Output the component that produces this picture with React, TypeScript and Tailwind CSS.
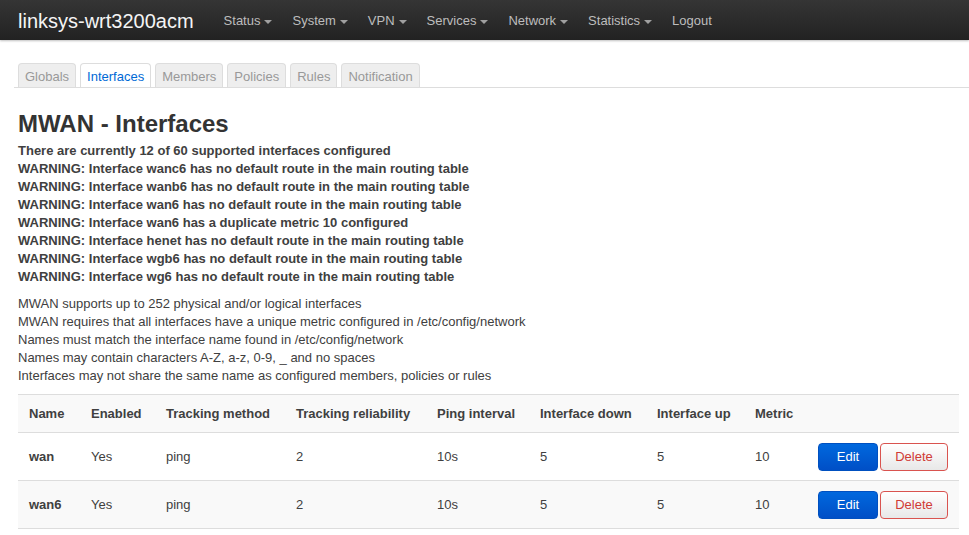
import React from "react";

const navItems = [
  { label: "Status", caret: true },
  { label: "System", caret: true },
  { label: "VPN", caret: true },
  { label: "Services", caret: true },
  { label: "Network", caret: true },
  { label: "Statistics", caret: true },
  { label: "Logout", caret: false },
];

const tabs = ["Globals", "Interfaces", "Members", "Policies", "Rules", "Notification"];

const warnings = [
  "There are currently 12 of 60 supported interfaces configured",
  "WARNING: Interface wanc6 has no default route in the main routing table",
  "WARNING: Interface wanb6 has no default route in the main routing table",
  "WARNING: Interface wan6 has no default route in the main routing table",
  "WARNING: Interface wan6 has a duplicate metric 10 configured",
  "WARNING: Interface henet has no default route in the main routing table",
  "WARNING: Interface wgb6 has no default route in the main routing table",
  "WARNING: Interface wg6 has no default route in the main routing table",
];

const notes = [
  "MWAN supports up to 252 physical and/or logical interfaces",
  "MWAN requires that all interfaces have a unique metric configured in /etc/config/network",
  "Names must match the interface name found in /etc/config/network",
  "Names may contain characters A-Z, a-z, 0-9, _ and no spaces",
  "Interfaces may not share the same name as configured members, policies or rules",
];

const headers = [
  "Name",
  "Enabled",
  "Tracking method",
  "Tracking reliability",
  "Ping interval",
  "Interface down",
  "Interface up",
  "Metric",
  "",
];

const rows = [
  ["wan", "Yes", "ping", "2", "10s", "5", "5", "10"],
  ["wan6", "Yes", "ping", "2", "10s", "5", "5", "10"],
];

const gridCols =
  "grid grid-cols-[62px_75px_130px_141px_103px_117px_98px_63px_152px]";

export default function App() {
  return (
    <div className="min-h-screen bg-white font-['Liberation_Sans',Arial,sans-serif] text-[13px] text-[#404040]">
      <header className="flex h-[40px] items-center bg-gradient-to-b from-[#353535] to-[#222222] pt-[1px] shadow-[0_1px_2px_rgba(0,0,0,0.25)]">
        <span className="ml-[18px] text-[20px] leading-none text-[#f5f5f5]">
          linksys-wrt3200acm
        </span>
        <nav className="ml-[20px] flex h-full items-center pt-[1px]">
          {navItems.map((n) => (
            <span
              key={n.label}
              className="flex items-center px-[10px] text-[13px] text-[#bdbdbd]"
            >
              {n.label}
              {n.caret && (
                <span className="ml-[4px] mt-[1px] h-0 w-0 border-x-[4px] border-t-[4px] border-x-transparent border-t-[#a0a0a0]" />
              )}
            </span>
          ))}
        </nav>
      </header>

      <div className="ml-[14px] mt-[23px] flex gap-[4px] border-b border-[#dddddd] pl-[4px]">
        {tabs.map((t) => {
          const active = t === "Interfaces";
          return (
            <div
              key={t}
              className={
                active
                  ? "flex h-[24px] items-center rounded-t-[4px] border border-b-0 border-[#dddddd] bg-white px-[6px] pt-[2px] text-[#0069d6]"
                  : "flex h-[24px] items-center rounded-t-[4px] border border-b-0 border-[#dddddd] bg-[#eeeeee] px-[6px] pt-[2px] text-[#999999]"
              }
            >
              {t}
            </div>
          );
        })}
      </div>

      <div className="px-[18px]">
        <h2 className="mt-[23px] mb-[5px] text-[24px] font-bold leading-[26px] text-[#333333]">
          MWAN - Interfaces
        </h2>
        <div className="font-bold leading-[18px]">
          {warnings.map((w) => (
            <div key={w}>{w}</div>
          ))}
        </div>
        <div className="mt-[9px] leading-[18px]">
          {notes.map((n) => (
            <div key={n}>{n}</div>
          ))}
        </div>

        <div className="mt-[9px] w-[941px]">
          <div
            className={`${gridCols} h-[39px] items-center border-y border-[#dddddd] bg-[#f9f9f9] font-bold`}
          >
            {headers.map((h, i) => (
              <div key={i} className="pl-[11px]">
                {h}
              </div>
            ))}
          </div>
          {rows.map((r, ri) => (
            <div
              key={ri}
              className={`${gridCols} h-[48px] items-center border-b border-[#dddddd] ${
                ri % 2 === 1 ? "bg-[#f9f9f9]" : "bg-white"
              }`}
            >
              {r.map((c, ci) => (
                <div key={ci} className={ci === 0 ? "pl-[11px] font-bold" : "pl-[11px]"}>
                  {c}
                </div>
              ))}
              <div className="flex gap-[2px] pl-[11px]">
                <button className="h-[28px] w-[60px] rounded-[4px] border border-[#0050c0] bg-gradient-to-b from-[#0068de] to-[#004fc6] text-[13px] text-white">
                  Edit
                </button>
                <button className="h-[28px] w-[68px] rounded-[4px] border border-[#d9534f] bg-gradient-to-b from-white to-[#e8e8e8] text-[13px] text-[#d03b36]">
                  Delete
                </button>
              </div>
            </div>
          ))}
        </div>
      </div>
    </div>
  );
}
